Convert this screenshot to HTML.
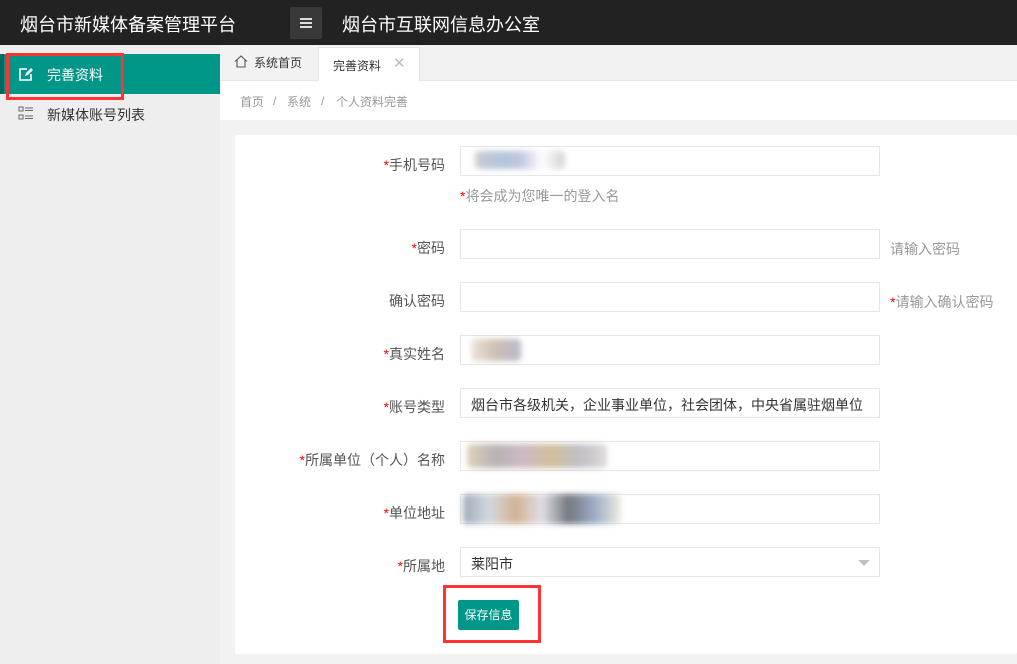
<!DOCTYPE html>
<html><head><meta charset="utf-8"><style>
*{margin:0;padding:0;box-sizing:border-box}
body{width:1017px;height:664px;overflow:hidden;background:#f2f2f2;font-family:"Liberation Sans","Noto Sans CJK SC",sans-serif;font-size:14px;color:#333;position:relative}
.hd{position:absolute;left:0;top:0;width:1017px;height:45px;background:#222}
.hd .t{position:absolute;left:20px;top:11px;color:#fff;font-size:18px}
.hd .b{position:absolute;left:290px;top:7px;width:32px;height:32px;background:#393939;border-radius:2px}
.hd .b i{position:absolute;left:10px;width:12px;height:1.5px;background:#ddd}
.hd .t2{position:absolute;left:342px;top:11px;color:#fff;font-size:18px}
.sd{position:absolute;left:0;top:45px;width:220px;height:619px;background:#eee}
.act{position:absolute;left:0;top:9px;width:220px;height:40px;background:#009688;border-left:4px solid #00695f}
.act span{position:absolute;left:43px;top:11px;color:#fff;font-size:14px}
.it2{position:absolute;left:47px;top:60px;font-size:14px;color:#333}
.red{position:absolute;border:3px solid #f33}
.tabs{position:absolute;left:220px;top:45px;width:797px;height:36px;background:#f2f2f2;border-bottom:1px solid #e6e6e6}
.tab1{position:absolute;left:15px;top:9px;font-size:12px;color:#333}
.tab2{position:absolute;left:98px;top:2px;width:102px;height:35px;background:#fff;border:1px solid #e6e6e6;border-bottom:none}
.tab2 span{position:absolute;left:14px;top:9px;font-size:12px}
.tab2 b{position:absolute;left:74px;top:6px;font-weight:normal;color:#bbb;font-size:15px}
.bc{position:absolute;left:220px;top:81px;width:797px;height:39px;background:#fff;font-size:12px;color:#999}
.bc span{position:absolute;top:12px}
.card{position:absolute;left:235px;top:135px;width:782px;height:519px;background:#fff;border-radius:2px}
.lb{position:absolute;right:572px;font-size:14px;color:#555;text-align:right;white-space:nowrap}
.lb i{color:#f00;font-style:normal}
.in{position:absolute;left:225px;width:420px;height:30px;border:1px solid #e6e6e6;background:#fff;font-size:14px;padding:6px 10px;color:#333;white-space:nowrap;overflow:hidden}
.tip{position:absolute;font-size:14px;color:#999}
.tip i{color:#f00;font-style:normal}
.blob{position:absolute;filter:blur(3px);border-radius:4px;opacity:.8}
.btn{position:absolute;left:223px;top:465px;width:61px;height:30px;background:#009688;color:#fff;font-size:12px;text-align:center;line-height:30px;border-radius:2px}
</style></head><body>
<div class="hd"><div class="t">烟台市新媒体备案管理平台</div>
<div class="b"><i style="top:11px"></i><i style="top:15px"></i><i style="top:19px"></i></div>
<div class="t2">烟台市互联网信息办公室</div></div>
<div class="sd">
<div class="act"><svg style="position:absolute;left:14px;top:13px" width="16" height="15" viewBox="0 0 16 15"><path d="M9 2H2v11h11V7" fill="none" stroke="#fff" stroke-width="1.6"/><path d="M7 9l1-3 5-5 2 2-5 5z" fill="#fff"/></svg><span>完善资料</span></div>
<svg style="position:absolute;left:18px;top:61px" width="16" height="15" viewBox="0 0 16 15"><rect x="1" y="1" width="4" height="4" fill="none" stroke="#666"/><rect x="1" y="9" width="4" height="4" fill="none" stroke="#666"/><path d="M7 2h8M7 4.5h8M7 10h8M7 12.5h8" stroke="#666"/></svg>
<div class="it2">新媒体账号列表</div>
</div>
<div class="red" style="left:6px;top:53px;width:118px;height:47px"></div>
<div class="tabs">
<svg style="position:absolute;left:14px;top:10px" width="14" height="13" viewBox="0 0 14 13"><path d="M1 6.5L7 1l6 5.5M3 5v7h8V5" fill="none" stroke="#555" stroke-width="1.1"/></svg>
<div class="tab1" style="left:34px">系统首页</div>
<div class="tab2"><span>完善资料</span><b>✕</b></div></div>
<div class="bc"><span style="left:20px">首页</span><span style="left:53px;top:13px">/</span><span style="left:67px">系统</span><span style="left:101px;top:13px">/</span><span style="left:116px">个人资料完善</span></div>
<div class="card">
<div class="lb" style="top:20px"><i>*</i>手机号码</div>
<div class="in" style="top:11px"></div>
<div class="blob" style="left:240px;top:16px;width:90px;height:18px;background:linear-gradient(90deg,#c8bfc8,#9fb8d0,#b0b8d8,#fff,#c9c6c4)"></div>
<div class="tip" style="left:225px;top:51px"><i>*</i>将会成为您唯一的登入名</div>
<div class="lb" style="top:103px"><i>*</i>密码</div>
<div class="in" style="top:94px"></div>
<div class="tip" style="left:655px;top:104px">请输入密码</div>
<div class="lb" style="top:156px">确认密码</div>
<div class="in" style="top:147px"></div>
<div class="tip" style="left:655px;top:157px"><i>*</i>请输入确认密码</div>
<div class="lb" style="top:209px"><i>*</i>真实姓名</div>
<div class="in" style="top:200px"></div>
<div class="blob" style="left:236px;top:204px;width:50px;height:22px;background:linear-gradient(90deg,#e8ddd0,#c0b0a0,#a8a8c0)"></div>
<div class="lb" style="top:262px"><i>*</i>账号类型</div>
<div class="in" style="top:253px">烟台市各级机关，企业事业单位，社会团体，中央省属驻烟单位</div>
<div class="lb" style="top:315px"><i>*</i>所属单位（个人）名称</div>
<div class="in" style="top:306px"></div>
<div class="blob" style="left:232px;top:309px;width:140px;height:24px;background:linear-gradient(90deg,#d8c8a8,#a8a0a0,#c0a8b8,#c8b080,#b0b0b8,#d8d0d0)"></div>
<div class="lb" style="top:368px"><i>*</i>单位地址</div>
<div class="in" style="top:359px"></div>
<div class="blob" style="left:228px;top:359px;width:158px;height:30px;background:linear-gradient(90deg,#8898a8,#c8d0d8,#c8a078,#d8d8e0,#505860,#8898b8,#e8e8d8)"></div>
<div class="lb" style="top:421px"><i>*</i>所属地</div>
<div class="in" style="top:412px">莱阳市</div>
<div style="position:absolute;left:623px;top:425px;width:0;height:0;border-left:6px solid transparent;border-right:6px solid transparent;border-top:6px solid #c2c2c2"></div>
<div class="btn">保存信息</div>
</div>
<div class="red" style="left:443px;top:585px;width:98px;height:58px"></div>
</body></html>
